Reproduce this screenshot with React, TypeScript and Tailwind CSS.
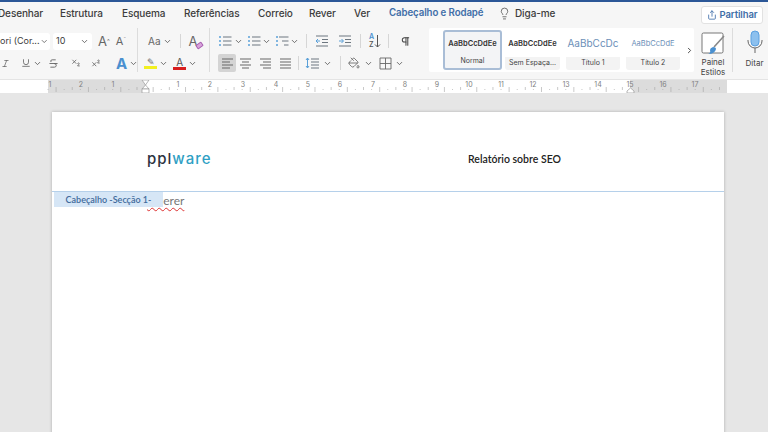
import {
  ChevronDown, ChevronRight, Italic, Lightbulb, PaintBucket, Pilcrow, Share, Strikethrough,
  Subscript, Superscript, Underline,
} from 'lucide-react';

const tabs = [
  { label: 'Desenhar', w: 'w-[62px]' },
  { label: 'Estrutura', w: 'w-[62px]' },
  { label: 'Esquema', w: 'w-[62px]' },
  { label: 'Referências', w: 'w-[74px]' },
  { label: 'Correio', w: 'w-[51px]' },
  { label: 'Rever', w: 'w-[45px]' },
  { label: 'Ver', w: 'w-[35px]' },
];

const styles = [
  { sample: 'AaBbCcDdEe', name: 'Normal', box: 'w-[59px] ml-[14px] border-[#a9bdd6] border-2 bg-[#f3f4f6]', text: 'text-[7.500px] font-semibold text-[#333]', label: 'bg-transparent' },
  { sample: 'AaBbCcDdEe', name: 'Sem Espaça...', box: 'w-[55px] ml-[3px]', text: 'text-[7.500px] font-semibold text-[#333]', label: 'bg-[#f3f3f3]' },
  { sample: 'AaBbCcDc', name: 'Título 1', box: 'w-[54px] ml-[6px]', text: 'text-[10px] text-[#6b8fb8]', label: 'bg-[#f3f3f3]' },
  { sample: 'AaBbCcDdE', name: 'Título 2', box: 'w-[54px] ml-[6px]', text: 'text-[7.500px] text-[#6b8fb8]', label: 'bg-[#f3f3f3]' },
];

const Chev = ({ className = '' }: { className?: string }) => (
  <ChevronDown className={`w-[9px] h-[9px] text-[#555] ${className}`} strokeWidth={2.2} />
);

const Sep = ({ className = '' }: { className?: string }) => <div className={`w-px h-[14px] bg-[#d6d6d6] ${className}`} />;

// little ribbon icon: blue markers on the left, grey lines on the right
function Lines({ rows, className = '' }: { rows: { x: number; y: number }[]; className?: string }) {
  return (
    <svg width="14" height="14" viewBox="0 0 14 14" className={className}>
      {rows.map((r, i) => (
        <g key={i}>
          <circle cx="2" cy={r.y} r="1" fill="#5aa0d8" />
          <line x1={r.x} x2="13.500" y1={r.y} y2={r.y} stroke="#6d7780" strokeWidth="1" />
        </g>
      ))}
    </svg>
  );
}

function Align({ rows, className = '' }: { rows: [number, number][]; className?: string }) {
  return (
    <svg width="13" height="13" viewBox="0 0 13 13" className={className}>
      {rows.map(([a, b], i) => (
        <line key={i} x1={a} x2={b} y1={2 + i * 3} y2={2 + i * 3} stroke="#666" strokeWidth="1" />
      ))}
    </svg>
  );
}

function Indent({ flip, className = '' }: { flip?: boolean; className?: string }) {
  return (
    <svg width="14" height="14" viewBox="0 0 14 14" className={className}>
      {[2, 12].map((y) => <line key={y} x1="1" x2="13" y1={y} y2={y} stroke="#6d7780" />)}
      {[5.500, 8.500].map((y) => <line key={y} x1="7" x2="13" y1={y} y2={y} stroke="#6d7780" />)}
      <path d={flip ? 'M1 7h4M3.500 5l2 2-2 2' : 'M5 7H1M3 5L1 7l2 2'} stroke="#5aa0d8" fill="none" />
    </svg>
  );
}

function Ruler() {
  const nums: [number, string][] = [[50, '1'], [81, '2'], [113, '1'], [178, '1'], [210, '2'], [243, '3'], [276, '4'], [308, '5'], [340, '6'], [373, '7'], [405, '8'], [437, '9'], [469, '10'], [501, '11'], [533, '12'], [566, '13'], [598, '14'], [630, '15'], [663, '16'], [695, '17']];
  const ticks: number[] = [];
  for (let i = 0; i < 84; i++) ticks.push(48 + i * 8.09);
  return (
    <svg width="768" height="13" className="block shrink-0">
      <rect width="768" height="13" fill="#ffffff" />
      <rect x="48" width="97" height="13" fill="#dcdcdc" />
      <rect x="630" width="97" height="13" fill="#dcdcdc" />
      {ticks.map((x, i) => (
        <line key={i} x1={x} x2={x} y1={i % 2 ? 7 : 9} y2={i % 4 === 1 ? 12 : 10} stroke="#a5a5a5" strokeWidth="0.6" />
      ))}
      {nums.map(([x, n], i) => (
        <text key={i} x={x} y="7" textAnchor="middle" fontSize="7" fontFamily="Inter, sans-serif" fill="#808080">{n}</text>
      ))}
      <path d="M142 0h7l-3.500 5z" fill="#fff" stroke="#999" strokeWidth="0.7" />
      <path d="M142 9l3.500-4 3.500 4z" fill="#fff" stroke="#999" strokeWidth="0.7" />
      <rect x="142" y="9" width="7" height="4" fill="#fff" stroke="#999" strokeWidth="0.7" />
      <path d="M627 13v-2l3.500-3 3.500 3v2z" fill="#fff" stroke="#999" strokeWidth="0.7" />
    </svg>
  );
}

export default function App() {
  return (
    <div className="w-[768px] h-[432px] overflow-hidden bg-[#e6e6e6] flex flex-col font-['Inter',sans-serif] text-[#3c3c3c]">
      <div className="h-[2px] bg-[#2b5797]" />

      {/* Tabs */}
      <div className="h-[26px] bg-[#f6f6f6] flex items-center text-[10px] font-medium tracking-[-0.1px] -ml-[2px] pr-[5px] pb-[3px]">
        {tabs.map((t) => (
          <span key={t.label} className={t.w}>{t.label}</span>
        ))}
        <span className="w-[109px] text-[#3f6ea8] text-[9.700px] font-semibold">Cabeçalho e Rodapé</span>
        <Lightbulb className="w-[13px] h-[13px] text-[#555] mr-[4px]" strokeWidth={1.5} />
        <span>Diga-me</span>
        <button className="ml-auto mt-[3px] w-[62px] h-[18px] bg-white border border-[#e2e2e2] rounded-[3px] flex items-center justify-center gap-[3px] text-[#3f6ea8] text-[9.500px] font-semibold">
          <Share className="w-[10px] h-[10px]" />
          Partilhar
        </button>
      </div>

      {/* Ribbon */}
      <div className="h-[52px] bg-[#f6f6f6] flex items-stretch pb-[7px] border-b border-[#e4e4e4]">
        {/* Font */}
        <div className="w-[138px] flex flex-col justify-between pt-[4px] shrink-0 border-r border-[#dcdcdc]">
          <div className="flex items-center h-[18px]">
            <div className="w-[50px] h-[17px] bg-white rounded-r-[3px] flex items-center justify-between pr-[2px] text-[9px] whitespace-nowrap overflow-hidden">
              <span>ori (Cor...</span><Chev />
            </div>
            <div className="w-[39px] h-[17px] ml-[3px] bg-white rounded-[3px] flex items-center justify-between px-[3px] text-[9px]">
              <span>10</span><Chev />
            </div>
            <span className="ml-[6px] text-[13px] text-[#666] leading-none">A<sup className="text-[6px]">^</sup></span>
            <span className="ml-[6px] text-[11px] text-[#666] leading-none">A<sup className="text-[6px]">ˇ</sup></span>
          </div>
          <div className="flex items-center h-[18px] text-[#666]">
            <Italic className="w-[9px] h-[9px] ml-[1px]" />
            <Underline className="w-[10px] h-[10px] ml-[11px]" />
            <Chev className="ml-[2px]" />
            <Strikethrough className="w-[11px] h-[11px] ml-[6px]" />
            <Subscript className="w-[10px] h-[10px] ml-[12px]" />
            <Superscript className="w-[10px] h-[10px] ml-[10px]" />
          </div>
        </div>
        <div className="w-[72px] flex flex-col justify-between pt-[4px] shrink-0 border-r border-[#dcdcdc]">
          <div className="flex items-center h-[18px] text-[#666]">
            <span className="text-[10px] ml-[10px]">Aa</span>
            <Chev className="ml-[2px]" />
            <Sep className="ml-[8px]" />
            <span className="ml-[8px] relative text-[13px] leading-none">
              A
              <span className="absolute -right-[5px] bottom-0 w-[7px] h-[5px] rotate-[-35deg] rounded-[1px] bg-[#d9a3dc] border border-[#a65fb0]" />
            </span>
          </div>
          <div className="flex items-center h-[18px]">
            <span className="text-[15px] font-bold text-[#4a90d0] -ml-[22px] leading-none">A</span>
            <Chev className="ml-[2px]" />
            <span className="ml-[6px] flex flex-col items-center leading-none">
              <span className="text-[9px] text-[#666]">✎</span>
              <span className="w-[13px] h-[3px] bg-[#f2f020]" />
            </span>
            <Chev className="ml-[2px]" />
            <span className="ml-[5px] flex flex-col items-center leading-none">
              <span className="text-[10px] text-[#555]">A</span>
              <span className="w-[13px] h-[3px] bg-[#d81e1e]" />
            </span>
            <Chev className="ml-[2px]" />
          </div>
        </div>

        {/* Paragraph */}
        <div className="w-[219px] flex flex-col justify-between pt-[4px] pl-[8px] shrink-0">
          <div className="flex items-center h-[18px]">
            <Lines rows={[{ x: 5, y: 3 }, { x: 5, y: 7 }, { x: 5, y: 11 }]} /><Chev className="ml-[2px]" />
            <Lines rows={[{ x: 5, y: 3 }, { x: 5, y: 7 }, { x: 5, y: 11 }]} className="ml-[4px]" /><Chev className="ml-[1px]" />
            <Lines rows={[{ x: 4, y: 3 }, { x: 7, y: 7 }, { x: 9, y: 11 }]} className="ml-[4px]" /><Chev className="ml-[1px]" />
            <Sep className="ml-[7px]" />
            <Indent className="ml-[8px]" />
            <Indent flip className="ml-[9px]" />
            <Sep className="ml-[8px]" />
            <span className="ml-[8px] flex items-center">
              <span className="flex flex-col text-[7px] leading-[8px] font-semibold">
                <span className="text-[#4a90d0]">A</span>
                <span className="text-[#555]">Z</span>
              </span>
              <svg width="7" height="14" viewBox="0 0 7 14"><path d="M3.500 1v12M1 10.500l2.500 2.500L6 10.500" stroke="#555" fill="none" /></svg>
            </span>
            <Sep className="ml-[7px]" />
            <Pilcrow className="w-[11px] h-[11px] ml-[11px] text-[#444]" strokeWidth={2.2} />
          </div>
          <div className="flex items-center h-[18px]">
            <div className="w-[18px] h-[18px] bg-[#d4d4d4] rounded-[2px] flex items-center justify-center">
              <Align rows={[[1, 12], [1, 9], [1, 12], [1, 9]]} />
            </div>
            <Align rows={[[1, 12], [3, 10], [1, 12], [3, 10]]} className="ml-[3px]" />
            <Align rows={[[1, 12], [4, 12], [1, 12], [4, 12]]} className="ml-[7px]" />
            <Align rows={[[1, 12], [1, 12], [1, 12], [1, 12]]} className="ml-[7px]" />
            <Sep className="ml-[6px]" />
            <svg width="15" height="14" viewBox="0 0 15 14" className="ml-[6px]">
              <path d="M2.500 2v10M1 4l1.500-2L4 4M1 10l1.500 2L4 10" stroke="#5aa0d8" fill="none" />
              {[3, 6, 9, 12].map((y) => <line key={y} x1="6" x2="14" y1={y} y2={y} stroke="#6d7780" />)}
            </svg>
            <Chev className="ml-[3px]" />
            <Sep className="ml-[8px]" />
            <PaintBucket className="w-[12px] h-[12px] ml-[7px] text-[#555]" strokeWidth={1.5} /><Chev className="ml-[4px]" />
            <svg width="13" height="13" viewBox="0 0 13 13" className="ml-[6px]">
              <path d="M1 1h11v11H1zM6.500 1v11M1 6.500h11" stroke="#666" fill="none" strokeWidth="0.9" />
            </svg>
            <Chev className="ml-[3px]" />
          </div>
        </div>

        {/* Style gallery */}
        <div className="w-[265px] bg-white rounded-[2px] flex items-stretch py-[2px] shrink-0">
          {styles.map((s) => (
            <div key={s.name} className={`${s.box} rounded-[3px] flex flex-col overflow-hidden`}>
              <div className={`flex-1 flex items-center justify-center whitespace-nowrap overflow-hidden ${s.text}`}>{s.sample}</div>
              <div className={`h-[13px] flex items-center justify-center text-[7px] text-[#444] whitespace-nowrap ${s.label}`}>{s.name}</div>
            </div>
          ))}
          <ChevronRight className="w-[9px] h-[9px] ml-[5px] self-center text-[#444]" strokeWidth={2.5} />
        </div>

        {/* Right */}
        <div className="flex flex-col items-center w-[39px] shrink-0 pt-[4px] text-[8px] leading-[10px] text-[#444] text-center border-r border-[#dcdcdc]">
          <svg width="24" height="24" viewBox="0 0 24 24" className="mb-[1px] shrink-0">
            <rect x="1" y="1" width="21" height="20" rx="1.500" fill="#fff" stroke="#555" strokeWidth="0.8" />
            <path d="M23 4 L13 15" stroke="#888" strokeWidth="1.600" />
            <path d="M12 15 q3 0 3 2 q-1 5 -8 5 q3-1 2-4 q0-2 3-3z" fill="#4a90d0" />
          </svg>
          <span className="whitespace-nowrap">Painel<br />Estilos</span>
        </div>
        <div className="flex-1 flex flex-col items-center pt-[2px] pl-[8px] text-[8px] leading-[9px] text-[#444]">
          <svg width="16" height="24" viewBox="0 0 16 24" className="mb-[5px] shrink-0">
            <rect x="4" y="1" width="8" height="15" rx="4" fill="#8cc0ee" stroke="#5aa0e0" />
            <path d="M1 10v1a7 7 0 0 0 14 0v-1M8 18v5" stroke="#666" fill="none" />
          </svg>
          <span>Ditar</span>
        </div>
      </div>

      <Ruler />

      {/* Document */}
      <div className="flex-1 pl-[52px] pr-[44px] pt-[19px] overflow-hidden">
        <div className="h-[400px] bg-white shadow-[0_0_3px_rgba(0,0,0,0.25)]">
          <div className="h-[80px] border-b border-[#b5d0ea] flex items-center pt-[14px]">
            <span className="ml-[95px] w-[70px] text-[15px] font-medium tracking-[1px] leading-none">
              <span className="text-[#2c3340]">ppl</span><span className="text-[#2f9fc4]">ware</span>
            </span>
            <span className="ml-[251px] mt-[3px] text-[10.500px] font-semibold text-[#222] font-['Lato',sans-serif] whitespace-nowrap">Relatório sobre SEO</span>
          </div>
          <div className="relative pl-[95px] text-[12px] leading-[17px]">
            <span className="text-[#777] font-['Lato',sans-serif] underline decoration-wavy decoration-[#d33] decoration-1 underline-offset-2">Querer</span>
            <div className="absolute left-[2px] top-0 w-[109px] h-[15px] bg-[#d6e6f6] flex items-center justify-center text-[9px] font-semibold text-[#3f6a9c] font-['Lato',sans-serif]">
              Cabeçalho -Secção 1-
            </div>
          </div>
        </div>
      </div>
    </div>
  );
}
